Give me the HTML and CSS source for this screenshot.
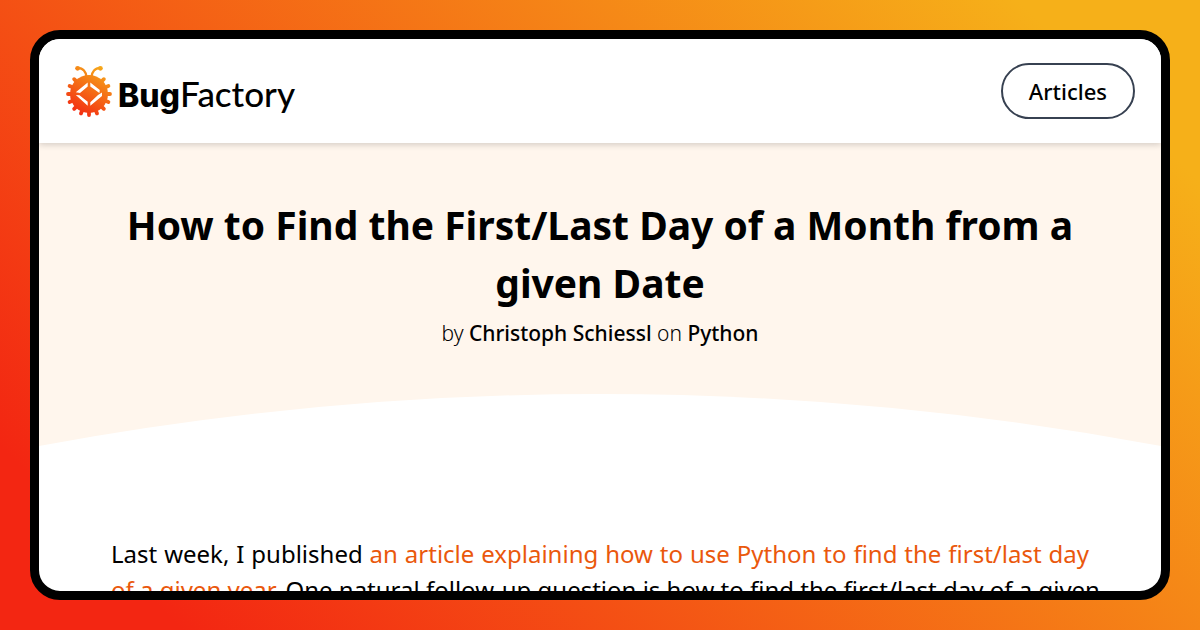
FILE: index.html
```html
<!DOCTYPE html>
<html lang="en">
<head>
<meta charset="utf-8">
<title>How to Find the First/Last Day of a Month from a given Date</title>
<link rel="stylesheet" href="styles.css">
</head>
<body>
<div class="frame">
  <header class="site-header">
    <a class="brand" href="#" aria-label="BugFactory">
      <svg class="brand-icon" viewBox="0 0 48 54" aria-hidden="true">
        <defs>
          <linearGradient id="flame" gradientUnits="userSpaceOnUse" x1="12" y1="50" x2="38" y2="4">
            <stop offset="0" stop-color="#f32b12"/>
            <stop offset="1" stop-color="#f6a81a"/>
          </linearGradient>
        </defs>
        <g fill="none" stroke="url(#flame)" stroke-linecap="round">
          <path stroke-width="2.4" d="M21.500 13C21 8 18 4 13 4M26.500 13C27 8 30 4 35 4"/>
          <path stroke-width="3.8" d="M24 30V51M3 30.010H45M9.150 15.150L38.850 44.850M38.850 15.150L9.150 44.850M24 30L32.040 49.400M24 30L15.960 49.400M4.600 21.960L43.400 38.040M43.400 21.960L4.600 38.040"/>
        </g>
        <circle cx="24" cy="30" r="19" fill="url(#flame)"/>
        <circle cx="12.600" cy="4.300" r="2.400" fill="url(#flame)"/>
        <circle cx="35.400" cy="4.300" r="2.400" fill="url(#flame)"/>
        <path class="brand-mark" d="M22.700 18.500V22.500L15 29L10.800 28.300ZM25.300 18.500L34.800 26L34.400 29L25.300 22.500ZM10.800 31L14.500 31.300L22.700 37.700V41.700ZM25.300 38.300L33 31L37 28.500V32L25.300 41.700Z"/>
      </svg>
      <span class="brand-name"><b class="brand-strong">Bug</b>Factory</span>
    </a>
    <nav>
      <a class="pill" href="#">Articles</a>
    </nav>
  </header>
  <main>
    <section class="hero">
      <h1 class="title">How to Find the First/Last Day of a Month from a given Date</h1>
      <p class="byline">by <a href="#">Christoph Schiessl</a> on <a href="#">Python</a></p>
      <svg class="curve" viewBox="0 0 1120 52" preserveAspectRatio="none" aria-hidden="true">
        <path d="M0 52Q560 -52 1120 52Z"/>
      </svg>
    </section>
    <article class="article">
      <p>Last week, I published <a href="#">an article explaining how to use Python to find the first/last day<br>of a given year</a>. One natural follow-up question is how to find the first/last day of a given</p>
    </article>
  </main>
</div>
</body>
</html>
```
FILE: styles.css
```css
* {
  box-sizing: border-box;
}

body {
  margin: 0;
  height: 100vh;
  padding: 30px;
  background: linear-gradient(45deg, #f32612 10%, #f6b019 90%);
  color: #000;
  font-family: "Noto Sans", sans-serif;
}

a {
  color: inherit;
  text-decoration: none;
}

.frame {
  height: 100%;
  overflow: hidden;
  border: 9px solid #000;
  border-radius: 30px;
  background: #fff;
}

.site-header {
  position: relative;
  display: flex;
  align-items: center;
  justify-content: space-between;
  padding: 24px 26px;
  background: #fff;
  box-shadow: 0 2px 6px rgba(0, 0, 0, 0.16);
}

.brand {
  display: flex;
  align-items: center;
  gap: 5px;
}

.brand-icon {
  width: 48px;
  height: 54px;
}

.brand-mark {
  fill: #fff;
}

.brand-name {
  padding-top: 6px;
  font-family: Lato, sans-serif;
  font-size: 35px;
  font-weight: 500;
  line-height: 40px;
}

.brand-strong {
  font-family: Inter, sans-serif;
  font-size: 32px;
  font-weight: 800;
}

.pill {
  display: block;
  padding: 11px 26px;
  border: 2px solid #374151;
  border-radius: 28px;
  font-size: 22px;
  font-weight: 500;
  line-height: 30px;
}

.hero {
  padding-top: 53px;
  background: #fff6ed;
  text-align: center;
}

.title {
  margin: 0 72px;
  font-size: 39px;
  font-weight: 700;
  line-height: 58px;
}

.byline {
  margin: 5px 0 45px;
  font-size: 21px;
  font-weight: 300;
  line-height: 32px;
}

.byline a {
  font-weight: 500;
}

.curve {
  display: block;
  width: 100%;
  height: 52px;
  fill: #fff;
}

.article {
  padding: 90px 72px 0;
  font-size: 24px;
  line-height: 36px;
  text-align: justify;
  text-align-last: justify;
  white-space: nowrap;
}

.article p {
  margin: 0;
}

.article a {
  color: #ea580c;
}
```
